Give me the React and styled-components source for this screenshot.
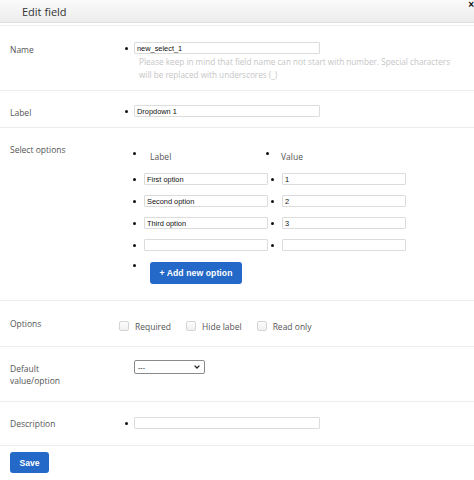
import React from 'react';
import styled, { createGlobalStyle } from 'styled-components';

const GlobalStyle = createGlobalStyle`
  html, body {
    margin: 0;
    padding: 0;
    background: #fff;
  }
  body {
    font-family: 'Open Sans', 'Liberation Sans', sans-serif;
  }
`;

const Modal = styled.div`
  width: 474px;
  height: 480px;
  overflow: hidden;
  background: #fff;
`;

const Header = styled.header`
  position: relative;
  height: 22px;
  padding-left: 22px;
  display: flex;
  align-items: center;
  font-size: 11px;
  color: #333;
  background: linear-gradient(#fbfbfb, #ececec);
  border-bottom: 1px solid #dedede;
  margin-bottom: 2px;
  box-shadow: 0 2px 0 #fff, 0 3px 0 #eee;
`;

const Close = styled.span`
  position: absolute;
  right: 0;
  top: 0;
  font-family: 'Liberation Sans', Arial, sans-serif;
  font-weight: 700;
  font-size: 10px;
  line-height: 10px;
  color: #111;
`;

const Row = styled.section`
  display: grid;
  grid-template-columns: 109px 1fr;
  align-items: start;
  padding: ${(p) => p.$pad};
  padding-left: 10px;
  border-bottom: 1px solid #ececec;
`;

const FieldLabel = styled.div`
  font-size: 8.5px;
  line-height: 12px;
  color: #555;
  margin-top: ${(p) => p.$top || 0}px;
  margin-bottom: -4px;
  width: ${(p) => p.$width || 'auto'};
`;

const Line = styled.div`
  display: flex;
  align-items: center;
  height: ${(p) => p.$h || 12}px;
  margin-bottom: ${(p) => p.$mb || 0}px;
`;

const Dot = styled.span`
  flex: none;
  width: 3px;
  height: 3px;
  border-radius: 50%;
  background: #111;
  margin-left: ${(p) => p.$ml || 0}px;
  margin-right: ${(p) => p.$mr || 0}px;
  align-self: ${(p) => (p.$top !== undefined ? 'flex-start' : 'center')};
  margin-top: ${(p) => p.$top || 0}px;
`;

const TextInput = styled.input`
  box-sizing: border-box;
  flex: none;
  width: ${(p) => p.$w}px;
  height: 12px;
  padding: 0 2px;
  border: 1px solid #dcdcdc;
  border-radius: 1px;
  font-family: 'Liberation Sans', Arial, sans-serif;
  font-size: 7.4px;
  line-height: 10px;
  color: #111;
  background: #fff;
  outline: none;
  margin-left: ${(p) => p.$ml || 0}px;
`;

const Hint = styled.p`
  margin: 1px 0 0 20px;
  width: 320px;
  font-size: 8.2px;
  line-height: 13px;
  color: #c6c6c6;
`;

const ColHead = styled.span`
  font-size: 8.5px;
  line-height: 12px;
  color: #555;
  align-self: flex-start;
  margin-top: 9px;
  width: ${(p) => p.$w || 'auto'};
  margin-left: ${(p) => p.$ml || 0}px;
`;

const AddButton = styled.button`
  margin-left: 14px;
  margin-top: 1px;
  width: 92px;
  height: 22px;
  border: none;
  border-radius: 3px;
  background: #2468c8;
  color: #fff;
  font-family: 'Liberation Sans', Arial, sans-serif;
  font-weight: 700;
  font-size: 8.6px;
  letter-spacing: 0.1px;
  cursor: pointer;
`;

const Checks = styled.div`
  display: flex;
  align-items: center;
  height: 12px;
`;

const Check = styled.label`
  display: flex;
  align-items: center;
  gap: 6px;
  margin-right: 15px;
  font-size: 8.5px;
  color: #555;
`;

const Box = styled.span`
  box-sizing: border-box;
  width: 10px;
  height: 10px;
  border: 1px solid #d4d4d4;
  border-radius: 2px;
  background: linear-gradient(#fdfdfd, #f0f0f0);
`;

const SelectBox = styled.div`
  box-sizing: border-box;
  margin-left: 15px;
  width: 71px;
  height: 14px;
  border: 1px solid #8a8a8a;
  border-radius: 2px;
  display: flex;
  align-items: center;
  justify-content: space-between;
  padding: 0 4px 0 3px;
  font-family: 'Liberation Sans', Arial, sans-serif;
  font-size: 7px;
  color: #222;
`;

const Footer = styled.footer`
  display: flex;
  padding: 6px 10px;
`;

const SaveButton = styled.button`
  width: 39px;
  height: 21px;
  border: none;
  border-radius: 3px;
  background: #2468c8;
  color: #fff;
  font-family: 'Liberation Sans', Arial, sans-serif;
  font-weight: 700;
  font-size: 8.6px;
  cursor: pointer;
`;

const options = [
  { label: 'First option', value: '1' },
  { label: 'Second option', value: '2' },
  { label: 'Third option', value: '3' },
  { label: '', value: '' },
];

const App = () => {
  return (
    <Modal>
      <GlobalStyle />
      <Header>
        Edit field
        <Close>×</Close>
      </Header>

      <Row $pad="17px 0 9px">
        <FieldLabel $top={2}>Name</FieldLabel>
        <div>
          <Line>
            <Dot $ml={6} $mr={6} />
            <TextInput $w={186} defaultValue="new_select_1" />
          </Line>
          <Hint>
            Please keep in mind that field name can not start with number. Special characters
            will be replaced with underscores (_)
          </Hint>
        </div>
      </Row>

      <Row $pad="14px 0 10px">
        <FieldLabel $top={2}>Label</FieldLabel>
        <Line>
          <Dot $ml={6} $mr={6} />
          <TextInput $w={186} defaultValue="Dropdown 1" />
        </Line>
      </Row>

      <Row $pad="14px 0 17px">
        <FieldLabel $top={2}>Select options</FieldLabel>
        <div>
          <Line $h={31}>
            <Dot $ml={14} $top={10} />
            <ColHead $ml={14} $w="116px">Label</ColHead>
            <Dot $top={10} />
            <ColHead $ml={12}>Value</ColHead>
          </Line>
          {options.map((o, i) => (
            <Line key={i} $mb={10}>
              <Dot $ml={14} $mr={8} />
              <TextInput $w={124} defaultValue={o.label} />
              <Dot $ml={3} />
              <TextInput $w={124} $ml={8} defaultValue={o.value} />
            </Line>
          ))}
          <Line $h={22}>
            <Dot $ml={14} $top={3} />
            <AddButton>+ Add new option</AddButton>
          </Line>
        </div>
      </Row>

      <Row $pad="19px 0 14px">
        <FieldLabel $top={-2}>Options</FieldLabel>
        <Checks>
          <Check>
            <Box />
            Required
          </Check>
          <Check>
            <Box />
            Hide label
          </Check>
          <Check>
            <Box />
            Read only
          </Check>
        </Checks>
      </Row>

      <Row $pad="13px 0 18px">
        <FieldLabel $top={3} $width="70px">
          Default value/option
        </FieldLabel>
        <div>
          <SelectBox>
            <span>---</span>
            <svg width="6" height="4" viewBox="0 0 6 4">
              <path d="M0.6 0.6 L3 3 L5.4 0.6" fill="none" stroke="#222" strokeWidth="1.3" />
            </svg>
          </SelectBox>
        </div>
      </Row>

      <Row $pad="15px 0 16px">
        <FieldLabel $top={1}>Description</FieldLabel>
        <Line>
          <Dot $ml={6} $mr={6} />
          <TextInput $w={186} defaultValue="" />
        </Line>
      </Row>

      <Footer>
        <SaveButton>Save</SaveButton>
      </Footer>
    </Modal>
  );
};

export default App;
